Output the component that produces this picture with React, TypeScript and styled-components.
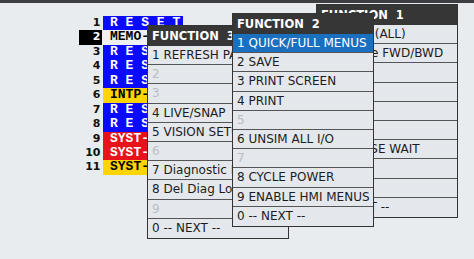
import { Fragment } from "react";
import styled, { createGlobalStyle } from "styled-components";

const GlobalStyle = createGlobalStyle`
  html, body {
    margin: 0;
    padding: 0;
    background: #e9ecef;
  }
  body {
    font-family: "DejaVu Sans", Verdana, sans-serif;
  }
`;

const Page = styled.div`
  position: relative;
  width: 474px;
  height: 259px;
  overflow: hidden;
  background: #e9ecef;
`;

const TopBar = styled.div`
  height: 3px;
  background: #3c3e41;
`;

const StatusList = styled.div`
  display: grid;
  grid-template-columns: 23px 80px;
  grid-auto-rows: 14.45px;
  column-gap: 1px;
  margin: 13px 0 0 79px;
  width: max-content;
`;

const Num = styled.div<{ $active?: boolean }>`
  font-family: "DejaVu Sans", Verdana, sans-serif;
  font-weight: bold;
  font-size: 11px;
  line-height: 14.45px;
  text-align: right;
  padding-right: 1.5px;
  color: ${(p) => (p.$active ? "#fff" : "#111")};
  background: ${(p) => (p.$active ? "#000" : "transparent")};
`;

type Tone = "blue" | "memo" | "yellow" | "red";

const toneBg: Record<Tone, string> = {
  blue: "#0a0aff",
  memo: "#eef0f2",
  yellow: "#ffd400",
  red: "#e8121a",
};
const toneFg: Record<Tone, string> = {
  blue: "#fff",
  memo: "#000",
  yellow: "#000",
  red: "#fff",
};

const StatusCell = styled.div<{ $tone: Tone }>`
  font-family: "Liberation Mono", "Courier New", monospace;
  font-weight: bold;
  font-size: 13px;
  line-height: 14.45px;
  padding-left: 7px;
  white-space: pre;
  overflow: hidden;
  background: ${(p) => toneBg[p.$tone]};
  color: ${(p) => toneFg[p.$tone]};
`;

const Window = styled.div<{ $x: number; $y: number; $z: number }>`
  position: absolute;
  left: ${(p) => p.$x}px;
  top: ${(p) => p.$y}px;
  z-index: ${(p) => p.$z};
  width: 142px;
  box-sizing: border-box;
  border: 1px solid #333;
  background: #e4e8ec;
`;

const Header = styled.div`
  height: 20px;
  display: flex;
  align-items: center;
  padding-left: 4px;
  background: #363636;
  color: #fff;
  font-weight: bold;
  font-size: 11.5px;
  white-space: pre;
  overflow: hidden;
`;

type ItemState = "normal" | "disabled" | "selected";

const Item = styled.div<{ $state: ItemState }>`
  height: 19.2px;
  box-sizing: border-box;
  display: flex;
  align-items: center;
  padding-left: 4px;
  font-size: 12px;
  white-space: pre;
  overflow: hidden;
  border-bottom: 1px solid #555;
  background: ${(p) => (p.$state === "selected" ? "#1a6fbf" : "transparent")};
  color: ${(p) =>
    p.$state === "selected" ? "#fff" : p.$state === "disabled" ? "#b9bdc3" : "#1c1c1c"};

  &:last-child {
    border-bottom: none;
  }
`;

interface IStatus {
  num: number;
  text: string;
  tone: Tone;
}

const statuses: IStatus[] = [
  { num: 1, text: "R E S E T", tone: "blue" },
  { num: 2, text: "MEMO-", tone: "memo" },
  { num: 3, text: "R E S E T", tone: "blue" },
  { num: 4, text: "R E S E T", tone: "blue" },
  { num: 5, text: "R E S E T", tone: "blue" },
  { num: 6, text: "INTP-", tone: "yellow" },
  { num: 7, text: "R E S E T", tone: "blue" },
  { num: 8, text: "R E S E T", tone: "blue" },
  { num: 9, text: "SYST-", tone: "red" },
  { num: 10, text: "SYST-", tone: "red" },
  { num: 11, text: "SYST-", tone: "yellow" },
];

interface IMenu {
  title: string;
  x: number;
  y: number;
  z: number;
  items: [string, ItemState][];
}

const menus: IMenu[] = [
  {
    title: "FUNCTION  1",
    x: 316,
    y: 4,
    z: 1,
    items: [
      ["1 RESET (ALL)", "normal"],
      ["2 Change FWD/BWD", "normal"],
      ["3", "disabled"],
      ["4", "disabled"],
      ["5", "disabled"],
      ["6", "disabled"],
      ["7 - PLEASE WAIT", "normal"],
      ["8", "disabled"],
      ["9", "disabled"],
      ["0 -- NEXT --", "normal"],
    ],
  },
  {
    title: "FUNCTION  3",
    x: 147,
    y: 25,
    z: 2,
    items: [
      ["1 REFRESH PAGE", "normal"],
      ["2", "disabled"],
      ["3", "disabled"],
      ["4 LIVE/SNAP", "normal"],
      ["5 VISION SETUP", "normal"],
      ["6", "disabled"],
      ["7 Diagnostic Log", "normal"],
      ["8 Del Diag Log", "normal"],
      ["9", "disabled"],
      ["0 -- NEXT --", "normal"],
    ],
  },
  {
    title: "FUNCTION  2",
    x: 232,
    y: 13,
    z: 3,
    items: [
      ["1 QUICK/FULL MENUS", "selected"],
      ["2 SAVE", "normal"],
      ["3 PRINT SCREEN", "normal"],
      ["4 PRINT", "normal"],
      ["5", "disabled"],
      ["6 UNSIM ALL I/O", "normal"],
      ["7", "disabled"],
      ["8 CYCLE POWER", "normal"],
      ["9 ENABLE HMI MENUS", "normal"],
      ["0 -- NEXT --", "normal"],
    ],
  },
];

function App() {
  return (
    <Page>
      <GlobalStyle />
      <TopBar />
      <StatusList>
        {statuses.map((s) => (
          <Fragment key={s.num}>
            <Num $active={s.num === 2}>{s.num}</Num>
            <StatusCell $tone={s.tone}>{s.text}</StatusCell>
          </Fragment>
        ))}
      </StatusList>
      {menus.map((m) => (
        <Window key={m.title} $x={m.x} $y={m.y} $z={m.z}>
          <Header>{m.title}</Header>
          {m.items.map(([label, state]) => (
            <Item key={label} $state={state}>
              {label}
            </Item>
          ))}
        </Window>
      ))}
    </Page>
  );
}

export default App;
